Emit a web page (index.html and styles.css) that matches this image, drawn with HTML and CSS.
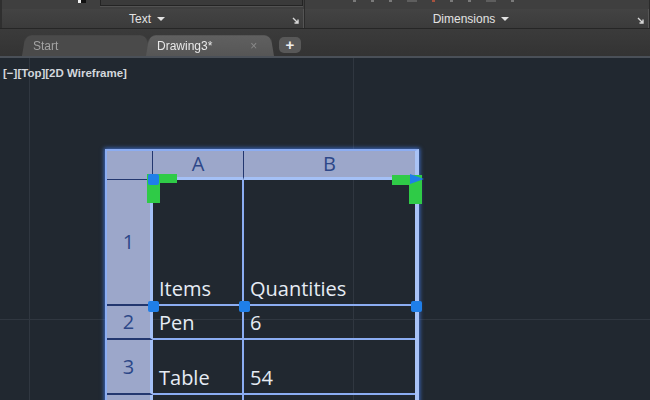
FILE: index.html
```html
<!DOCTYPE html>
<html lang="en">
<head>
  <meta charset="UTF-8" />
  <meta name="viewport" content="width=device-width, initial-scale=1" />
  <title>Drawing3* - Table</title>
  <link rel="stylesheet" href="styles.css">
</head>
<body>
  <div class="ribbon">
    <div class="panel panel-text">
      <div class="panel-tools">
        <span class="tool-icon"></span>
        <span class="style-box"></span>
      </div>
      <div class="panel-title">
        <span class="title">Text <span class="caret"></span></span>
        <svg class="launcher" viewBox="0 0 7 7" width="7" height="7">
          <path d="M1 1 L5.5 5.5 M6 2.5 V6 H2.5" stroke="#d8d8d8" stroke-width="1.4" fill="none" />
        </svg>
      </div>
    </div>
    <div class="panel panel-dims">
      <div class="panel-tools">
        <span class="bit"></span><span class="bit"></span><span class="bit"></span>
        <span class="bit wide"></span><span class="bit red"></span><span class="bit"></span>
        <span class="bit"></span><span class="bit wide"></span><span class="bit"></span>
      </div>
      <div class="panel-title">
        <span class="title">Dimensions <span class="caret"></span></span>
        <svg class="launcher" viewBox="0 0 7 7" width="7" height="7">
          <path d="M1 1 L5.5 5.5 M6 2.5 V6 H2.5" stroke="#d8d8d8" stroke-width="1.4" fill="none" />
        </svg>
      </div>
    </div>
  </div>

  <div class="tabbar">
    <div class="tab">Start</div>
    <div class="tab active">Drawing3* <span class="close">×</span></div>
    <div class="tab-add">+</div>
  </div>

  <div class="viewport">
    <div class="view-label">[−][Top][2D Wireframe]</div>

    <div class="acad-table">
      <div class="cell corner"></div>
      <div class="cell head">A</div>
      <div class="cell head last">B</div>

      <div class="cell rownum">1</div>
      <div class="cell">Items</div>
      <div class="cell last">Quantities</div>

      <div class="cell rownum">2</div>
      <div class="cell">Pen</div>
      <div class="cell last">6</div>

      <div class="cell rownum">3</div>
      <div class="cell">Table</div>
      <div class="cell last">54</div>

      <div class="cell rownum"></div>
      <div class="cell"></div>
      <div class="cell last"></div>

      <svg class="corner-mark mark-left" viewBox="0 0 30 30" width="30" height="30">
        <path d="M0 1 H30 V10 H13 V30 H0 Z" fill="#2fcb47" />
      </svg>
      <svg class="corner-mark mark-right" viewBox="0 0 31 31" width="31" height="31">
        <path d="M0 2 H30 V31 H17 V12 H0 Z" fill="#2fcb47" />
      </svg>

      <span class="grip g-top"></span>
      <span class="grip g-row-left"></span>
      <span class="grip g-row-mid"></span>
      <span class="grip g-row-right"></span>
      <span class="grip-arrow"></span>
    </div>
  </div>
</body>
</html>
```

FILE: styles.css
```css
:root {
  --ribbon-top: #474747;
  --ribbon-bottom: #3b3b3b;
  --canvas: #212830;
  --grid: #303740;
  --select-fill: #9ca7ca;
  --select-text: #2d4788;
  --line: #8cadf2;
  --line-dark: #23376f;
  --grip: #1f7fe9;
  --cell-text: #e6ecf4;
}

* {
  box-sizing: border-box;
}

body {
  margin: 0;
  width: 650px;
  height: 400px;
  overflow: hidden;
  display: flex;
  flex-direction: column;
  background-color: var(--canvas);
  font-family: "Liberation Sans", Arial, sans-serif;
}

/* ribbon */
.ribbon {
  height: 29px;
  display: flex;
  background: linear-gradient(var(--ribbon-top), var(--ribbon-bottom));
  border-bottom: 1px solid #262626;
}

.panel {
  display: flex;
  flex-direction: column;
  border-right: 1px solid #2b2b2b;
  box-shadow: inset -1px 0 #555;
}

.panel-text {
  width: 305px;
  border-left: 2px solid #2f2f2f;
}

.panel-dims {
  flex: 1;
}

.panel-tools {
  height: 9px;
  display: flex;
  align-items: flex-start;
  gap: 6px;
  background: #3f3f3f;
}

.panel-text .panel-tools {
  padding-left: 76px;
  gap: 14px;
}

.panel-dims .panel-tools {
  padding-left: 48px;
}

.tool-icon {
  width: 8px;
  height: 3px;
  background: linear-gradient(to right, #f2f2f2 40%, #111 40%);
}

.style-box {
  width: 203px;
  height: 6px;
  border: 1px solid #242424;
  border-top: none;
  background: #3a3a3a;
  box-shadow: 0 1px #525252;
}

.bit {
  width: 3px;
  height: 2px;
  background: #7a7a7a;
  margin-right: 9px;
}

.bit.wide {
  width: 10px;
  background: #5e5e5e;
}

.bit.red {
  background: #a8523e;
  width: 3px;
}

.panel-title {
  flex: 1;
  display: flex;
  align-items: center;
  justify-content: center;
  position: relative;
  font-size: 12px;
  color: #e2e2e2;
}

.title {
  display: flex;
  align-items: center;
  gap: 6px;
  margin-right: 12px;
}

.caret {
  width: 0;
  height: 0;
  border-left: 4px solid transparent;
  border-right: 4px solid transparent;
  border-top: 4px solid #e2e2e2;
}

.launcher {
  position: absolute;
  right: 5px;
  top: 8px;
}

/* document tabs */
.tabbar {
  height: 29px;
  display: flex;
  align-items: flex-end;
  padding-left: 22px;
  background: linear-gradient(#3b3b3b, #333);
  border-bottom: 2px solid #4a5058;
}

.tab {
  position: relative;
  z-index: 0;
  width: 128px;
  height: 22px;
  padding: 5px 0 0 11px;
  font-size: 12px;
  color: #a3a3a3;
}

.tab::before {
  content: "";
  position: absolute;
  inset: 0;
  z-index: -1;
  background: #4a4a4a;
  border-radius: 7px 7px 0 0;
  transform: perspective(40px) rotateX(6deg);
  transform-origin: bottom;
}

.tab.active {
  margin-left: -4px;
  color: #e8e8e8;
  display: flex;
  gap: 38px;
}

.tab.active::before {
  background: linear-gradient(#606060, #565656);
}

.close {
  color: #8a8a8a;
  font-size: 12px;
}

.tab-add {
  width: 22px;
  height: 16px;
  margin: 0 0 3px 5px;
  border-radius: 5px;
  background: #585858;
  color: #eee;
  font-size: 15px;
  font-weight: bold;
  line-height: 16px;
  text-align: center;
}

/* model space */
.viewport {
  flex: 1;
  position: relative;
  background-color: var(--canvas);
  background-image:
    linear-gradient(to right, var(--grid) 1px, transparent 1px),
    linear-gradient(to bottom, var(--grid) 1px, transparent 1px);
  background-size: 324px 324px;
  background-position: 29px 0, 0 261px;
}

.view-label {
  padding: 9px 0 0 3px;
  font-size: 11.5px;
  font-weight: bold;
  color: #d3d7dc;
}

.acad-table {
  position: absolute;
  left: 105px;
  top: 91px;
  display: grid;
  grid-template-columns: 46px 91px 171px;
  grid-template-rows: 29px 126px 34px 55px 40px;
  border: 2px solid var(--line);
  border-right: 4px solid #a9c3f6;
  box-shadow: 0 0 4px 1px rgba(70, 130, 250, 0.7);
  font-family: "Open Sans", sans-serif;
  font-size: 20px;
  line-height: 1;
}

.cell {
  display: flex;
  align-items: flex-end;
  padding: 0 0 5px 6px;
  color: var(--cell-text);
  border-right: 2px solid var(--line);
  border-bottom: 2px solid var(--line);
}

.cell.last {
  border-right: none;
}

.corner,
.head,
.rownum {
  background: var(--select-fill);
  color: var(--select-text);
  justify-content: center;
  align-items: center;
  padding: 0;
}

.corner {
  border-right: 1px solid var(--line-dark);
  border-bottom: 1px solid var(--line-dark);
}

.head {
  border-right: 1px solid var(--line-dark);
  border-bottom: 3px solid #a4c0f6;
}

.rownum {
  border-right: 3px solid #a4c0f6;
  border-bottom: 2px solid var(--line-dark);
}

.corner-mark {
  position: absolute;
}

.mark-left {
  left: 40px;
  top: 22px;
}

.mark-right {
  left: 285px;
  top: 22px;
}

.grip {
  position: absolute;
  width: 11px;
  height: 11px;
  border-radius: 2px;
  background: var(--grip);
}

.g-top {
  left: 41px;
  top: 23px;
}

.g-row-left {
  left: 41px;
  top: 150px;
}

.g-row-mid {
  left: 132px;
  top: 150px;
}

.g-row-right {
  left: 304px;
  top: 150px;
}

.grip-arrow {
  position: absolute;
  left: 303px;
  top: 23px;
  width: 0;
  height: 0;
  border-top: 5px solid transparent;
  border-bottom: 5px solid transparent;
  border-left: 14px solid var(--grip);
}
```
